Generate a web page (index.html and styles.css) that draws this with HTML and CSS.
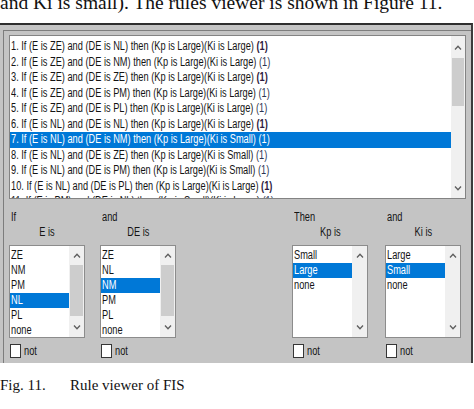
FILE: index.html
```html
<!DOCTYPE html>
<html>
<head>
<meta charset="utf-8">
<link rel="stylesheet" href="styles.css">
</head>
<body>
<p class="intro">and Ki is small). The rules viewer is shown in Figure 11.</p>
<div class="viewer">
  <div class="frame">
    <div class="rules">
      <div class="rows">
        <div class="row"><span class="t">1. If (E is ZE) and (DE is NL) then (Kp is Large)(Ki is Large) <b class="w b">(1)</b></span></div>
        <div class="row"><span class="t">2. If (E is ZE) and (DE is NM) then (Kp is Large)(Ki is Large) <span class="w">(1)</span></span></div>
        <div class="row"><span class="t">3. If (E is ZE) and (DE is ZE) then (Kp is Large)(Ki is Large) <b class="w b">(1)</b></span></div>
        <div class="row"><span class="t">4. If (E is ZE) and (DE is PM) then (Kp is Large)(Ki is Large) <span class="w">(1)</span></span></div>
        <div class="row"><span class="t">5. If (E is ZE) and (DE is PL) then (Kp is Large)(Ki is Large) <span class="w">(1)</span></span></div>
        <div class="row"><span class="t">6. If (E is NL) and (DE is NL) then (Kp is Large)(Ki is Large) <b class="w b">(1)</b></span></div>
        <div class="row sel"><span class="t">7. If (E is NL) and (DE is NM) then (Kp is Large)(Ki is Small) (1)</span></div>
        <div class="row"><span class="t">8. If (E is NL) and (DE is ZE) then (Kp is Large)(Ki is Small) <span class="w">(1)</span></span></div>
        <div class="row"><span class="t">9. If (E is NL) and (DE is PM) then (Kp is Large)(Ki is Small) <span class="w">(1)</span></span></div>
        <div class="row"><span class="t">10. If (E is NL) and (DE is PL) then (Kp is Large)(Ki is Large) <b class="w b">(1)</b></span></div>
        <div class="row"><span class="t">11. If (E is PM) and (DE is NL) then (Kp is Small)(Ki is Large) <span class="w">(1)</span></span></div>
      </div>
      <div class="sb">
        <div class="btn up"><svg width="8" height="5" viewBox="0 0 8 5"><polyline points="1,4.5 4,1.2 7,4.5"/></svg></div>
        <div class="thumb"></div>
        <div class="track"></div>
        <div class="btn dn"><svg width="8" height="5" viewBox="0 0 8 5"><polyline points="1,0.5 4,3.8 7,0.5"/></svg></div>
      </div>
    </div>

    <div class="clauses">
      <div class="col c1">
        <div class="h1"><span class="t">If</span></div>
        <div class="h2"><span class="tc">E is</span></div>
        <div class="box">
          <div class="opts">
            <div class="opt"><span class="t">ZE</span></div>
            <div class="opt"><span class="t">NM</span></div>
            <div class="opt"><span class="t">PM</span></div>
            <div class="opt sel"><span class="t">NL</span></div>
            <div class="opt"><span class="t">PL</span></div>
            <div class="opt"><span class="t">none</span></div>
          </div>
          <div class="sbs">
            <div class="btn up"><svg width="8" height="5" viewBox="0 0 8 5"><polyline points="1,4.5 4,1.2 7,4.5"/></svg></div>
            <div class="thumb"></div>
            <div class="track"></div>
            <div class="btn dn"><svg width="8" height="5" viewBox="0 0 8 5"><polyline points="1,0.5 4,3.8 7,0.5"/></svg></div>
          </div>
        </div>
        <div class="chk"><span class="cb"></span><span class="t">not</span></div>
      </div>

      <div class="col c2">
        <div class="h1"><span class="t">and</span></div>
        <div class="h2"><span class="tc">DE is</span></div>
        <div class="box">
          <div class="opts">
            <div class="opt"><span class="t">ZE</span></div>
            <div class="opt"><span class="t">NL</span></div>
            <div class="opt sel"><span class="t">NM</span></div>
            <div class="opt"><span class="t">PM</span></div>
            <div class="opt"><span class="t">PL</span></div>
            <div class="opt"><span class="t">none</span></div>
          </div>
          <div class="sbs">
            <div class="btn up"><svg width="8" height="5" viewBox="0 0 8 5"><polyline points="1,4.5 4,1.2 7,4.5"/></svg></div>
            <div class="thumb"></div>
            <div class="track"></div>
            <div class="btn dn"><svg width="8" height="5" viewBox="0 0 8 5"><polyline points="1,0.5 4,3.8 7,0.5"/></svg></div>
          </div>
        </div>
        <div class="chk"><span class="cb"></span><span class="t">not</span></div>
      </div>

      <div class="col c3">
        <div class="h1"><span class="t">Then</span></div>
        <div class="h2"><span class="tc">Kp is</span></div>
        <div class="box">
          <div class="opts">
            <div class="opt"><span class="t">Small</span></div>
            <div class="opt sel"><span class="t">Large</span></div>
            <div class="opt"><span class="t">none</span></div>
          </div>
          <div class="sbs">
            <div class="btn up"><svg width="8" height="5" viewBox="0 0 8 5"><polyline points="1,4.5 4,1.2 7,4.5"/></svg></div>
            <div class="track"></div>
            <div class="btn dn"><svg width="8" height="5" viewBox="0 0 8 5"><polyline points="1,0.5 4,3.8 7,0.5"/></svg></div>
          </div>
        </div>
        <div class="chk"><span class="cb"></span><span class="t">not</span></div>
      </div>

      <div class="col c4">
        <div class="h1"><span class="t">and</span></div>
        <div class="h2"><span class="tc">Ki is</span></div>
        <div class="box">
          <div class="opts">
            <div class="opt"><span class="t">Large</span></div>
            <div class="opt sel"><span class="t">Small</span></div>
            <div class="opt"><span class="t">none</span></div>
          </div>
          <div class="sbs">
            <div class="btn up"><svg width="8" height="5" viewBox="0 0 8 5"><polyline points="1,4.5 4,1.2 7,4.5"/></svg></div>
            <div class="track"></div>
            <div class="btn dn"><svg width="8" height="5" viewBox="0 0 8 5"><polyline points="1,0.5 4,3.8 7,0.5"/></svg></div>
          </div>
        </div>
        <div class="chk"><span class="cb"></span><span class="t">not</span></div>
      </div>
    </div>
  </div>
</div>
<p class="caption"><span class="fig">Fig. 11.</span><span>Rule viewer of FIS</span></p>
</body>
</html>
```

FILE: styles.css
```css
* { box-sizing: border-box; }
html, body { margin: 0; background: #fff; }
body {
  width: 474px;
  height: 409px;
  overflow: hidden;
  font-family: "Liberation Serif", "Times New Roman", serif;
  color: #111;
}
.intro {
  margin: -7px 0 0 0;
  height: 30px;
  font-size: 19.5px;
  line-height: 20px;
  white-space: nowrap;
}
.viewer {
  width: 473px;
  height: 340px;
  background: #c4c4c4;
  border-top: 2px solid #2e2e2e;
  border-right: 2px solid #3c3c3c;
  padding: 5px 0 0 3px;
  font-family: "Liberation Sans", Arial, sans-serif;
  font-size: 12px;
  color: #141414;
}
.frame {
  height: 100%;
  border-left: 1px solid #7d7d7d;
  border-top: 1px solid #7d7d7d;
  padding: 4px 0 0 5px;
}
.t {
  display: inline-block;
  transform: scaleX(0.77);
  transform-origin: 0 50%;
  white-space: nowrap;
}
.tc {
  display: inline-block;
  transform: scaleX(0.77);
  transform-origin: 50% 50%;
  white-space: nowrap;
}
.rules {
  width: 457px;
  height: 164px;
  border: 1px solid #838383;
  background: #fff;
  display: flex;
  overflow: hidden;
}
.rows {
  flex: 1;
  padding-top: 3px;
  overflow: hidden;
}
.row {
  height: 15.5px;
  line-height: 15.5px;
  padding-left: 1px;
  white-space: nowrap;
}
.row.sel, .opt.sel { background: #0078d7; color: #fff; }
.w { color: #2b3552; }
.w.b { color: #2d1a40; font-weight: bold; }
.sb, .sbs {
  background: #f0f0f0;
  display: flex;
  flex-direction: column;
}
.sb { width: 14px; }
.sbs { width: 15px; }
.btn {
  display: flex;
  align-items: center;
  justify-content: center;
}
.btn svg polyline { fill: none; stroke: #5e5e5e; stroke-width: 1.3; }
.sb .up { height: 22px; }
.sb .thumb { height: 48px; background: #cdcdcd; margin: 0 1px; }
.sb .dn { height: 20px; }
.track { flex: 1; }
.sbs .up { height: 19px; }
.sbs .thumb { height: 51px; background: #cdcdcd; margin: 0 1px; }
.sbs .dn { height: 19px; }

.clauses {
  display: flex;
  margin-top: 11px;
}
.col {
  width: 76px;
  display: flex;
  flex-direction: column;
}
.c2 { margin-left: 15px; }
.c3 { margin-left: 116px; }
.c4 { margin-left: 17px; }
.h1 { height: 15px; line-height: 15px; padding-left: 2px; }
.h2 { height: 15px; line-height: 15px; text-align: center; }
.box {
  margin-top: 5px;
  height: 93px;
  border: 1px solid #8c8c8c;
  background: #fff;
  display: flex;
  overflow: hidden;
}
.opts { flex: 1; padding-top: 1.5px; overflow: hidden; }
.opt { height: 15px; line-height: 15px; padding-left: 1px; }
.chk {
  margin-top: 5px;
  height: 15px;
  display: flex;
  align-items: center;
}
.cb {
  width: 11px;
  height: 14px;
  margin-left: 1px;
  margin-right: 3px;
  border: 1px solid #363636;
  background: #fff;
}
.caption {
  margin: 14px 0 0 0;
  display: flex;
  font-size: 15px;
  line-height: 17px;
  white-space: nowrap;
}
.fig { width: 70px; }
```
